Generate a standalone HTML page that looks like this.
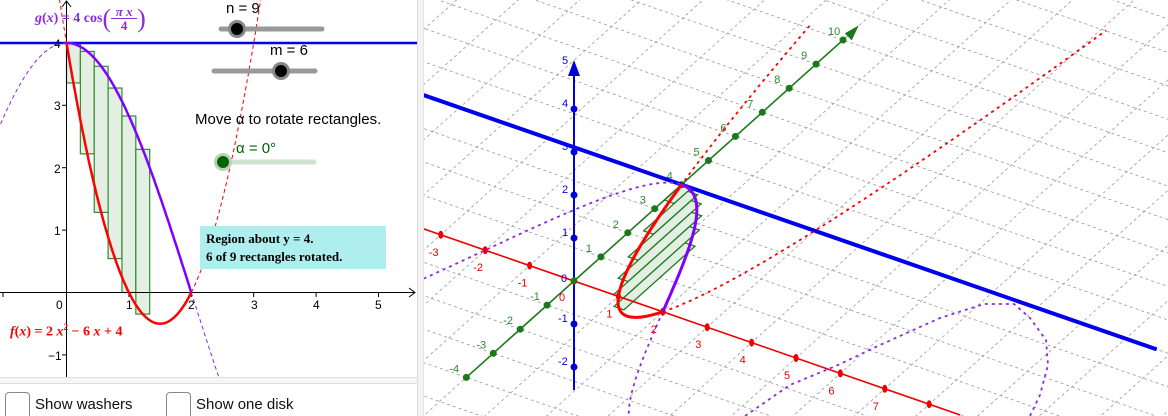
<!DOCTYPE html>
<html style="overflow:hidden"><head><meta charset="utf-8">
<style>
html,body{margin:0;width:1168px;height:416px;overflow:hidden}
body{background:#fff;font-family:"Liberation Sans",sans-serif;position:relative}
.abs{position:absolute}
svg{overflow:hidden}
.serif{font-family:"Liberation Serif",serif;font-weight:bold}
.cb{position:absolute;top:392px;width:25px;height:24px;border:1.5px solid #888;border-bottom:none;border-radius:4px 4px 0 0;background:#fff;box-sizing:border-box}
.lbl{position:absolute;top:396px;font-size:15px;line-height:18px;color:#111}
</style></head><body>
<svg id="L" class="abs" style="left:0;top:0" width="417" height="378"></svg>
<div class="abs" style="left:0;top:377px;width:417px;height:7px;background:#f6f6f6;border-top:1px solid #ddd;border-bottom:1px solid #ddd;box-sizing:border-box"></div>
<div class="abs" style="left:417px;top:0;width:7px;height:416px;background:#f3f3f3;border-left:1px solid #ddd;border-right:1px solid #e4e4e4;box-sizing:border-box"></div>
<div class="cb" style="left:5px"></div><div class="lbl" style="left:35px">Show washers</div>
<div class="cb" style="left:166px"></div><div class="lbl" style="left:196px">Show one disk</div>
<svg id="R" class="abs" style="left:424px;top:0" width="744" height="416"></svg>

<div class="abs serif" style="left:35px;top:4px;color:#8a2be2;font-size:14px;white-space:nowrap"><i>g</i>(<i>x</i>) = 4 cos<span style="font-size:26px;font-weight:normal;vertical-align:-5px">(</span><span style="display:inline-block;text-align:center;vertical-align:middle;font-size:13px;line-height:13px"><i>π x</i><br><span style="border-top:1px solid #8a2be2;display:inline-block;width:26px">4</span></span><span style="font-size:26px;font-weight:normal;vertical-align:-5px">)</span></div>
<div class="abs serif" style="left:10px;top:322px;color:#f00;font-size:14px;white-space:nowrap"><i>f</i>(<i>x</i>) = 2 <i>x</i><sup style="font-size:9px">2</sup> − 6 <i>x</i> + 4</div>
<div class="abs" style="left:226px;top:0px;font-size:15px">n = 9</div>
<div class="abs" style="left:270px;top:42px;font-size:15px">m = 6</div>
<div class="abs" style="left:195px;top:111px;font-size:15px">Move α to rotate rectangles.</div>
<div class="abs" style="left:236px;top:140px;font-size:15px;color:#006400">α = 0°</div>
<div class="abs serif" style="left:200px;top:226px;width:186px;height:43px;background:#afeeee;font-size:13px;line-height:18px;padding:4px 0 0 6px;box-sizing:border-box">Region about y = 4.<br>6 of 9 rectangles rotated.</div>

<script>
const NS="http://www.w3.org/2000/svg";
function el(svg,tag,a){const e=document.createElementNS(NS,tag);for(const k in a)e.setAttribute(k,a[k]);svg.appendChild(e);return e;}
const f=x=>2*x*x-6*x+4, g=x=>4*Math.cos(Math.PI*x/4);
function path(fn,a,b,M){let d="";const n=80;for(let i=0;i<=n;i++){const x=a+(b-a)*i/n;const p=M(x,fn(x));d+=(i?"L":"M")+p[0].toFixed(1)+" "+p[1].toFixed(1);}return d;}
function line(s,p,q,a){a.x1=p[0];a.y1=p[1];a.x2=q[0];a.y2=q[1];return el(s,"line",a);}
const S=document.getElementById("L");
const Lm=(x,y)=>[66.5+62.4*x,292.5-62.4*y];
const w=2/9;
for(let i=0;i<6;i++){const m=(i+.5)*w;const a=Lm(i*w,g(m)),b=Lm((i+1)*w,f(m));
el(S,"rect",{x:a[0],y:a[1],width:b[0]-a[0],height:b[1]-a[1],fill:"#e4efe4",stroke:"#2e8b2e","stroke-width":1.2});}
line(S,[0,292.5],[414,292.5],{stroke:"#000","stroke-width":1});
el(S,"path",{d:"M409 288 L415 292.5 L409 297",fill:"none",stroke:"#000"});
line(S,[66.5,378],[66.5,2],{stroke:"#000","stroke-width":1});
el(S,"path",{d:"M62 7 L66.5 1 L71 7",fill:"none",stroke:"#000"});
for(let k=1;k<=5;k++){const x=Lm(k,0)[0];line(S,[x,292.5],[x,297],{stroke:"#000"});}
for(let k=-1;k<=4;k++){if(!k)continue;const y=Lm(0,k)[1];line(S,[62,y],[66.5,y],{stroke:"#000"});}
line(S,[3,292.5],[3,297],{stroke:"#000"});
line(S,[0,43],[417,43],{stroke:"#0000ee","stroke-width":2.5});
el(S,"path",{d:path(g,-1.1,0,Lm)+path(g,2,2.5,Lm),fill:"none",stroke:"#8a2be2","stroke-width":1,"stroke-dasharray":"4,3"});
el(S,"path",{d:path(f,-0.13,0,Lm)+path(f,2,3.15,Lm),fill:"none",stroke:"#f00","stroke-width":1,"stroke-dasharray":"4,3"});
el(S,"path",{d:path(g,0,2,Lm),fill:"none",stroke:"#8000ff","stroke-width":2.5});
el(S,"path",{d:path(f,0,2,Lm),fill:"none",stroke:"#f00","stroke-width":2.5});
[["0",56],["1",126],["2",188],["3",251],["4",313],["5",375]].forEach(t=>{const e=el(S,"text",{x:t[1],y:309,"font-size":12,"font-family":"Liberation Sans"});e.textContent=t[0];});
[["1",235],["2",173],["3",110],["4",48],["−1",360]].forEach(t=>{const e=el(S,"text",{x:t[0]=="−1"?48:54,y:t[1],"font-size":12,"font-family":"Liberation Sans"});e.textContent=t[0];});
function slider(x1,x2,y,kx,col,knob,halo){line(S,[x1,y],[x2,y],{stroke:col,"stroke-width":5,"stroke-linecap":"round"});el(S,"circle",{cx:kx,cy:y,r:9,fill:halo});el(S,"circle",{cx:kx,cy:y,r:6,fill:knob});}
slider(221,322,29,237,"#999","#000","#888");
slider(214,315,71,281,"#999","#000","#888");
slider(220,314,162,223,"#cfe3cf","#006400","#b9d3b9");
const R=document.getElementById("R");
const P=(x,y,z=0)=>[150+44.4*x+26.9*y,281+15.4*x-24.1*y-43*z];
for(let k=-8;k<=18;k++)line(R,P(k,-8),P(k,16),{stroke:"#999","stroke-width":0.8,"stroke-dasharray":"3,3"});
for(let j=-8;j<=16;j++)line(R,P(-8,j),P(18,j),{stroke:"#999","stroke-width":0.8,"stroke-dasharray":"3,3"});
for(let i=0;i<6;i++){const m=(i+.5)*w,x0=i*w,x1=(i+1)*w;const pts=[P(x0,f(m)),P(x1,f(m)),P(x1,g(m)),P(x0,g(m))];
el(R,"polygon",{points:pts.map(p=>p.join(",")).join(" "),fill:"#e4efe4",stroke:"#1e7b1e","stroke-width":1.3});}
line(R,P(-3.5,0),P(8.7,0),{stroke:"#e00","stroke-width":1.6});
line(R,P(0,-4.1),P(0,10.1),{stroke:"#1a7a1a","stroke-width":1.6});
line(R,[150,390],[150,70],{stroke:"#0000dd","stroke-width":2});
el(R,"polygon",{points:"144,76 150,60 156,76",fill:"#0000dd"});
{const a=P(0,10.4);el(R,"polygon",{points:`${a[0]+5},${a[1]-5} ${a[0]-9},${a[1]+3} ${a[0]-2},${a[1]+10}`,fill:"#1a7a1a"});}
for(let k=-3;k<=8;k++){const p=P(k,0);el(R,"ellipse",{cx:p[0],cy:p[1],rx:2.5,ry:4,fill:"#e00"});if(k!=0){const t=el(R,"text",{x:p[0]-12,y:p[1]+21,"font-size":11,fill:"#e00","font-family":"Liberation Sans"});t.textContent=k;}}
{const t=el(R,"text",{x:135,y:301,"font-size":11,fill:"#e00","font-family":"Liberation Sans"});t.textContent="0";}
for(let k=-4;k<=10;k++){const p=P(0,k);el(R,"circle",{cx:p[0],cy:p[1],r:3.5,fill:"#1a7a1a"});if(k){const t=el(R,"text",{x:p[0]-15+(k<0?-2:0),y:p[1]-5,"font-size":11,fill:"#2a8a2a","font-family":"Liberation Sans"});t.textContent=k;}}
for(let k=-2;k<=5;k++){const y=281-43*k;if(k<5&&k)el(R,"circle",{cx:150,cy:y,r:3.5,fill:"#0000dd"});if(k){const t=el(R,"text",{x:138-(k<0?4:0),y:y-2,"font-size":11,fill:"#0000dd","font-family":"Liberation Sans"});t.textContent=k;}}
{const t=el(R,"text",{x:137,y:282,"font-size":11,fill:"#0000dd","font-family":"Liberation Sans"});t.textContent="0";}
line(R,P(-6.1,4),P(10.7,4),{stroke:"#0000ee","stroke-width":4});
el(R,"path",{d:path(g,-2.7,0,P)+path(g,2,3.5,P),fill:"none",stroke:"#8a2be2","stroke-width":1.8,"stroke-dasharray":"3,4"});
el(R,"path",{d:"M321 416 L366 385 L414 365 L456 345 L516 318 L560 304 L590 304 L606 318 L622 340 L624 365 L616 395 L606 416",fill:"none",stroke:"#8a2be2","stroke-width":1.8,"stroke-dasharray":"3,4"});
el(R,"path",{d:path(f,-0.8,0,P)+path(f,2,4.1,P),fill:"none",stroke:"#f00","stroke-width":1.8,"stroke-dasharray":"3,4"});
el(R,"path",{d:path(g,0,2,P),fill:"none",stroke:"#8000ff","stroke-width":3});
el(R,"path",{d:path(f,0,2,P),fill:"none",stroke:"#f00","stroke-width":3});
</script>
</body></html>
